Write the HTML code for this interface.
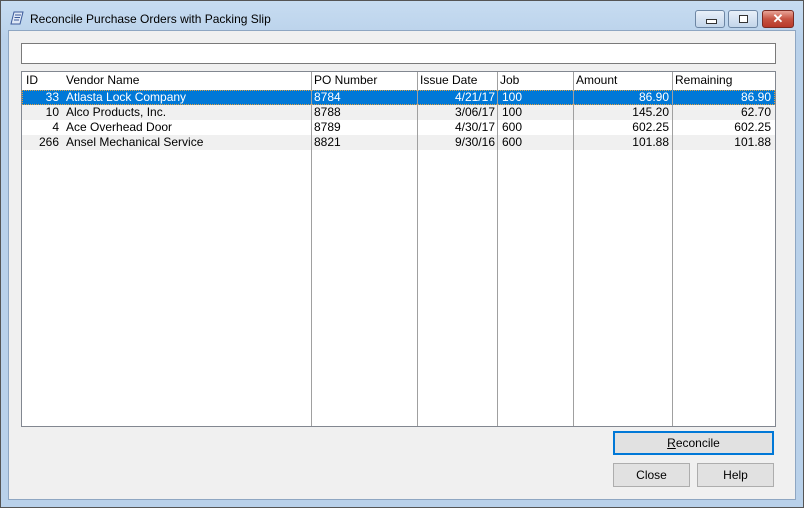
<!DOCTYPE html><html><head><style>
body{margin:0;width:804px;height:508px;position:relative;overflow:hidden;font-family:"Liberation Sans",sans-serif;font-size:12px;color:#000;background:#bcd3eb}
.frame{position:absolute;left:0;top:0;width:802px;height:506px;border:1px solid #555;background:linear-gradient(#c7dcf1,#b9d1ea 40px,#b9d1ea)}
.client{position:absolute;left:8px;top:30px;width:788px;height:470px;background:#f0f0f0;border:1px solid #8ea6c2;box-sizing:border-box}
.a{position:absolute}
.cell{position:absolute;top:0;height:15px;line-height:15px;white-space:nowrap}
.btn{position:absolute;background:#e1e1e1;border:1px solid #adadad;box-sizing:border-box;text-align:center;font-size:12px}
</style></head><body>
<div class="frame"></div>
<svg class="a" style="left:10px;top:10px" width="16" height="16"><path d="M4 2h9l-3 12H1z" fill="#dfe8f6" stroke="#3c5a9a"/><path d="M5 5h6M4.5 7.5h5.5M4 10h5" stroke="#3c5a9a"/></svg>
<div class="a" style="left:30px;top:12px;font-size:12px">Reconcile Purchase Orders with Packing Slip</div>
<div class="a" style="left:695px;top:10px;width:30px;height:18px;border:1px solid #6d86a4;border-radius:3px;background:linear-gradient(#e8f0f9,#c3d5ea);box-sizing:border-box"><div class="a" style="left:10px;top:8px;width:9px;height:3px;border:1px solid #333;background:#fff"></div></div>
<div class="a" style="left:728px;top:10px;width:30px;height:18px;border:1px solid #6d86a4;border-radius:3px;background:linear-gradient(#e8f0f9,#c3d5ea);box-sizing:border-box"><div class="a" style="left:10px;top:4px;width:7px;height:6px;border:1px solid #333;background:#fff"></div></div>
<div class="a" style="left:762px;top:10px;width:32px;height:18px;border:1px solid #7a2a22;border-radius:3px;background:linear-gradient(#e8a497,#c75443 50%,#b8392a);box-sizing:border-box;color:#fff;font-weight:bold;text-align:center;line-height:16px;font-size:13px">✕</div>
<div class="client"></div>
<div class="a" style="left:21px;top:43px;width:755px;height:21px;background:#fff;border:1px solid #7a7a7a;box-sizing:border-box"></div>
<div class="a" style="left:21px;top:71px;width:755px;height:356px;background:#fff;border:1px solid #828790;box-sizing:border-box">
<div class="a" style="left:0;top:0;width:753px;height:18px">
<div class="cell" style="left:4px;top:1px">ID</div><div class="cell" style="left:44px;top:1px">Vendor Name</div><div class="cell" style="left:292px;top:1px">PO Number</div><div class="cell" style="left:398px;top:1px">Issue Date</div><div class="cell" style="left:478px;top:1px">Job</div><div class="cell" style="left:554px;top:1px">Amount</div><div class="cell" style="left:653px;top:1px">Remaining</div></div>
<div class="a" style="left:0;top:18px;width:753px;height:15px;background:#0078d7;color:#fff;outline:1px dotted #e0a040;outline-offset:-1px"></div>
<div class="a" style="left:0;top:33px;width:753px;height:15px;background:#f0f0f0"></div>
<div class="a" style="left:0;top:63px;width:753px;height:15px;background:#f0f0f0"></div>
<div class="a" style="left:289px;top:0;width:1px;height:354px;background:#a0a0a0"></div>
<div class="a" style="left:395px;top:0;width:1px;height:354px;background:#a0a0a0"></div>
<div class="a" style="left:475px;top:0;width:1px;height:354px;background:#a0a0a0"></div>
<div class="a" style="left:551px;top:0;width:1px;height:354px;background:#a0a0a0"></div>
<div class="a" style="left:650px;top:0;width:1px;height:354px;background:#a0a0a0"></div>
<div class="a" style="left:0;top:18px;width:753px;height:15px;color:#fff">
<div class="cell" style="right:716px">33</div><div class="cell" style="left:44px">Atlasta Lock Company</div><div class="cell" style="left:292px">8784</div><div class="cell" style="right:280px">4/21/17</div><div class="cell" style="left:480px">100</div><div class="cell" style="right:106px">86.90</div><div class="cell" style="right:4px">86.90</div></div>
<div class="a" style="left:0;top:33px;width:753px;height:15px">
<div class="cell" style="right:716px">10</div><div class="cell" style="left:44px">Alco Products, Inc.</div><div class="cell" style="left:292px">8788</div><div class="cell" style="right:280px">3/06/17</div><div class="cell" style="left:480px">100</div><div class="cell" style="right:106px">145.20</div><div class="cell" style="right:4px">62.70</div></div>
<div class="a" style="left:0;top:48px;width:753px;height:15px">
<div class="cell" style="right:716px">4</div><div class="cell" style="left:44px">Ace Overhead Door</div><div class="cell" style="left:292px">8789</div><div class="cell" style="right:280px">4/30/17</div><div class="cell" style="left:480px">600</div><div class="cell" style="right:106px">602.25</div><div class="cell" style="right:4px">602.25</div></div>
<div class="a" style="left:0;top:63px;width:753px;height:15px">
<div class="cell" style="right:716px">266</div><div class="cell" style="left:44px">Ansel Mechanical Service</div><div class="cell" style="left:292px">8821</div><div class="cell" style="right:280px">9/30/16</div><div class="cell" style="left:480px">600</div><div class="cell" style="right:106px">101.88</div><div class="cell" style="right:4px">101.88</div></div>
</div>
<div class="btn" style="left:613px;top:431px;width:161px;height:24px;border:2px solid #0078d7;line-height:20px"><u>R</u>econcile</div>
<div class="btn" style="left:613px;top:463px;width:77px;height:24px;line-height:22px">Close</div>
<div class="btn" style="left:697px;top:463px;width:77px;height:24px;line-height:22px">Help</div>
</body></html>
